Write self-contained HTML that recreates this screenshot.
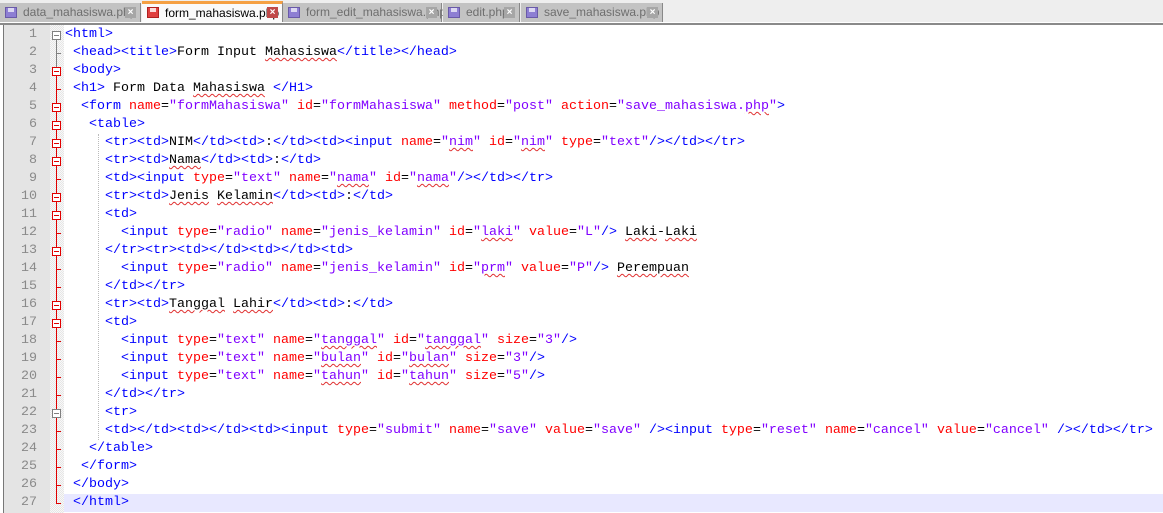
<!DOCTYPE html>
<html><head><style>
body{margin:0;width:1163px;height:513px;background:#fff;position:relative;overflow:hidden;font-family:"Liberation Mono",monospace;}
#bar{position:absolute;left:0;top:0;width:1163px;height:22px;background:#eeeeee;}
#sep{position:absolute;left:0;top:22px;width:1163px;height:3px;background:linear-gradient(#fff 0,#fff 1px,#8a8a8a 1px,#8a8a8a 3px);}
.tab{position:absolute;top:3px;height:19px;background:#c3c3c3;border-right:1px solid #888;box-sizing:border-box;font:12px "Liberation Sans",sans-serif;color:#6e6e6e;line-height:19px;padding-left:23px;}
.tab.act{background:#fafafa;top:1px;height:22px;color:#000;border-top:3px solid #f5a043;line-height:18px;}
.ic{position:absolute;left:5px;top:4px;width:12px;height:11px;background:#8d7ed3;border:1px solid #6a5aa8;box-sizing:border-box;}
.ic::after{content:"";position:absolute;left:2px;top:0;width:6px;height:4px;background:#dcd8f2;}
.act .ic{background:#e04040;border-color:#b02020;top:3px;}
.act .ic::after{background:#fbdcdc;}
.x{position:absolute;right:4px;top:4px;width:11px;height:11px;background:#a6a6a6;color:#fff;font:bold 10px/11px "Liberation Sans",sans-serif;text-align:center;}
.act .x{background:#c04a4a;top:3px;}
#gut{position:absolute;left:3px;top:25px;width:47px;height:488px;background:#e4e4e4;border-left:1px solid #777;}
#fold{position:absolute;left:50px;top:25px;width:14px;height:488px;background-color:#f4f4f4;background-image:repeating-conic-gradient(#e6e6e6 0 25%,#f8f8f8 0 50%);background-size:2px 2px;}
.n{position:absolute;left:3px;width:34px;text-align:right;color:#8a8a8a;font-size:13.33px;height:18px;line-height:18px;}
.l{position:absolute;left:65px;height:18px;line-height:18px;font-size:13.33px;white-space:pre;color:#000;}
#hl{position:absolute;left:64px;top:494px;width:1099px;height:18px;background:#e8e8ff;}
.b{color:#0000ff}.r{color:#ff0000}.p{color:#8000ff}
.u{text-decoration:underline wavy #e03030;text-decoration-thickness:1px;text-underline-offset:2px;}
.bx{position:absolute;left:52px;width:9px;height:9px;box-sizing:border-box;border:1px solid #e00000;background:#fff;}
.bx::after{content:"";position:absolute;left:1px;top:3px;width:5px;height:1px;background:#e00000;}
.g{border-color:#808080}.g::after{background:#808080}
.tk{position:absolute;left:57px;width:4px;height:1px;background:#e00000;}
.guide{position:absolute;width:0;border-left:1px dotted #bbb;}
</style></head><body>
<div id="bar"></div>
<div class="tab" style="left:0;width:141px"><span class="ic"></span>data_mahasiswa.php<span class="x">×</span></div>
<div class="tab act" style="left:142px;width:141px"><span class="ic"></span>form_mahasiswa.php<span class="x">×</span></div>
<div class="tab" style="left:283px;width:159px"><span class="ic"></span>form_edit_mahasiswa.php<span class="x">×</span></div>
<div class="tab" style="left:443px;width:77px"><span class="ic"></span>edit.php<span class="x">×</span></div>
<div class="tab" style="left:521px;width:142px"><span class="ic"></span>save_mahasiswa.php<span class="x">×</span></div>
<div id="sep"></div>
<div id="gut"></div>
<div id="fold"></div>
<div id="hl"></div>
<!-- fold line -->
<div style="position:absolute;left:56px;top:40px;width:1px;height:27px;background:#808080"></div>
<div style="position:absolute;left:56px;top:67px;width:1px;height:437px;background:#e00000"></div>
<div style="position:absolute;left:56px;top:503px;width:5px;height:1px;background:#e00000"></div>
<div class="bx g" style="top:31px"></div>
<div class="bx" style="top:67px"></div>
<div class="bx" style="top:103px"></div>
<div class="bx" style="top:121px"></div>
<div class="bx" style="top:139px"></div>
<div class="bx" style="top:157px"></div>
<div class="bx" style="top:193px"></div>
<div class="bx" style="top:211px"></div>
<div class="bx" style="top:247px"></div>
<div class="bx" style="top:301px"></div>
<div class="bx" style="top:319px"></div>
<div class="bx g" style="top:409px"></div>
<div class="tk" style="top:53px;background:#808080"></div>
<div class="tk" style="top:89px"></div><div class="tk" style="top:179px"></div><div class="tk" style="top:233px"></div><div class="tk" style="top:269px"></div><div class="tk" style="top:287px"></div><div class="tk" style="top:341px"></div><div class="tk" style="top:359px"></div><div class="tk" style="top:377px"></div><div class="tk" style="top:395px"></div><div class="tk" style="top:431px"></div><div class="tk" style="top:449px"></div><div class="tk" style="top:467px"></div><div class="tk" style="top:485px"></div>
<div class="guide" style="left:98px;top:134px;height:306px"></div>
<div class="n" style="top:26px">1</div><div class="n" style="top:44px">2</div><div class="n" style="top:62px">3</div><div class="n" style="top:80px">4</div><div class="n" style="top:98px">5</div><div class="n" style="top:116px">6</div><div class="n" style="top:134px">7</div><div class="n" style="top:152px">8</div><div class="n" style="top:170px">9</div><div class="n" style="top:188px">10</div><div class="n" style="top:206px">11</div><div class="n" style="top:224px">12</div><div class="n" style="top:242px">13</div><div class="n" style="top:260px">14</div><div class="n" style="top:278px">15</div><div class="n" style="top:296px">16</div><div class="n" style="top:314px">17</div><div class="n" style="top:332px">18</div><div class="n" style="top:350px">19</div><div class="n" style="top:368px">20</div><div class="n" style="top:386px">21</div><div class="n" style="top:404px">22</div><div class="n" style="top:422px">23</div><div class="n" style="top:440px">24</div><div class="n" style="top:458px">25</div><div class="n" style="top:476px">26</div><div class="n" style="top:494px">27</div>

<div class="l" style="top:26px"><span class="b">&lt;html&gt;</span></div>
<div class="l" style="top:44px"> <span class="b">&lt;head&gt;&lt;title&gt;</span>Form Input <span class="u">Mahasiswa</span><span class="b">&lt;/title&gt;&lt;/head&gt;</span></div>
<div class="l" style="top:62px"> <span class="b">&lt;body&gt;</span></div>
<div class="l" style="top:80px"> <span class="b">&lt;h1&gt;</span> Form Data <span class="u">Mahasiswa</span> <span class="b">&lt;/H1&gt;</span></div>
<div class="l" style="top:98px">  <span class="b">&lt;form </span><span class="r">name</span>=<span class="p">"formMahasiswa"</span> <span class="r">id</span>=<span class="p">"formMahasiswa"</span> <span class="r">method</span>=<span class="p">"post"</span> <span class="r">action</span>=<span class="p">"save_mahasiswa.<span class="u">php</span>"</span><span class="b">&gt;</span></div>
<div class="l" style="top:116px">   <span class="b">&lt;table&gt;</span></div>
<div class="l" style="top:134px">     <span class="b">&lt;tr&gt;&lt;td&gt;</span>NIM<span class="b">&lt;/td&gt;&lt;td&gt;</span>:<span class="b">&lt;/td&gt;&lt;td&gt;&lt;input </span><span class="r">name</span>=<span class="p">"<span class="u">nim</span>"</span> <span class="r">id</span>=<span class="p">"<span class="u">nim</span>"</span> <span class="r">type</span>=<span class="p">"text"</span><span class="b">/&gt;&lt;/td&gt;&lt;/tr&gt;</span></div>
<div class="l" style="top:152px">     <span class="b">&lt;tr&gt;&lt;td&gt;</span><span class="u">Nama</span><span class="b">&lt;/td&gt;&lt;td&gt;</span>:<span class="b">&lt;/td&gt;</span></div>
<div class="l" style="top:170px">     <span class="b">&lt;td&gt;&lt;input </span><span class="r">type</span>=<span class="p">"text"</span> <span class="r">name</span>=<span class="p">"<span class="u">nama</span>"</span> <span class="r">id</span>=<span class="p">"<span class="u">nama</span>"</span><span class="b">/&gt;&lt;/td&gt;&lt;/tr&gt;</span></div>
<div class="l" style="top:188px">     <span class="b">&lt;tr&gt;&lt;td&gt;</span><span class="u">Jenis</span> <span class="u">Kelamin</span><span class="b">&lt;/td&gt;&lt;td&gt;</span>:<span class="b">&lt;/td&gt;</span></div>
<div class="l" style="top:206px">     <span class="b">&lt;td&gt;</span></div>
<div class="l" style="top:224px">       <span class="b">&lt;input </span><span class="r">type</span>=<span class="p">"radio"</span> <span class="r">name</span>=<span class="p">"jenis_kelamin"</span> <span class="r">id</span>=<span class="p">"<span class="u">laki</span>"</span> <span class="r">value</span>=<span class="p">"L"</span><span class="b">/&gt;</span> <span class="u">Laki</span>-<span class="u">Laki</span></div>
<div class="l" style="top:242px">     <span class="b">&lt;/tr&gt;&lt;tr&gt;&lt;td&gt;&lt;/td&gt;&lt;td&gt;&lt;/td&gt;&lt;td&gt;</span></div>
<div class="l" style="top:260px">       <span class="b">&lt;input </span><span class="r">type</span>=<span class="p">"radio"</span> <span class="r">name</span>=<span class="p">"jenis_kelamin"</span> <span class="r">id</span>=<span class="p">"<span class="u">prm</span>"</span> <span class="r">value</span>=<span class="p">"P"</span><span class="b">/&gt;</span> <span class="u">Perempuan</span></div>
<div class="l" style="top:278px">     <span class="b">&lt;/td&gt;&lt;/tr&gt;</span></div>
<div class="l" style="top:296px">     <span class="b">&lt;tr&gt;&lt;td&gt;</span><span class="u">Tanggal</span> <span class="u">Lahir</span><span class="b">&lt;/td&gt;&lt;td&gt;</span>:<span class="b">&lt;/td&gt;</span></div>
<div class="l" style="top:314px">     <span class="b">&lt;td&gt;</span></div>
<div class="l" style="top:332px">       <span class="b">&lt;input </span><span class="r">type</span>=<span class="p">"text"</span> <span class="r">name</span>=<span class="p">"<span class="u">tanggal</span>"</span> <span class="r">id</span>=<span class="p">"<span class="u">tanggal</span>"</span> <span class="r">size</span>=<span class="p">"3"</span><span class="b">/&gt;</span></div>
<div class="l" style="top:350px">       <span class="b">&lt;input </span><span class="r">type</span>=<span class="p">"text"</span> <span class="r">name</span>=<span class="p">"<span class="u">bulan</span>"</span> <span class="r">id</span>=<span class="p">"<span class="u">bulan</span>"</span> <span class="r">size</span>=<span class="p">"3"</span><span class="b">/&gt;</span></div>
<div class="l" style="top:368px">       <span class="b">&lt;input </span><span class="r">type</span>=<span class="p">"text"</span> <span class="r">name</span>=<span class="p">"<span class="u">tahun</span>"</span> <span class="r">id</span>=<span class="p">"<span class="u">tahun</span>"</span> <span class="r">size</span>=<span class="p">"5"</span><span class="b">/&gt;</span></div>
<div class="l" style="top:386px">     <span class="b">&lt;/td&gt;&lt;/tr&gt;</span></div>
<div class="l" style="top:404px">     <span class="b">&lt;tr&gt;</span></div>
<div class="l" style="top:422px">     <span class="b">&lt;td&gt;&lt;/td&gt;&lt;td&gt;&lt;/td&gt;&lt;td&gt;&lt;input </span><span class="r">type</span>=<span class="p">"submit"</span> <span class="r">name</span>=<span class="p">"save"</span> <span class="r">value</span>=<span class="p">"save"</span> <span class="b">/&gt;&lt;input </span><span class="r">type</span>=<span class="p">"reset"</span> <span class="r">name</span>=<span class="p">"cancel"</span> <span class="r">value</span>=<span class="p">"cancel"</span> <span class="b">/&gt;&lt;/td&gt;&lt;/tr&gt;</span></div>
<div class="l" style="top:440px">   <span class="b">&lt;/table&gt;</span></div>
<div class="l" style="top:458px">  <span class="b">&lt;/form&gt;</span></div>
<div class="l" style="top:476px"> <span class="b">&lt;/body&gt;</span></div>
<div class="l" style="top:494px"> <span class="b">&lt;/html&gt;</span></div>
</body></html>
